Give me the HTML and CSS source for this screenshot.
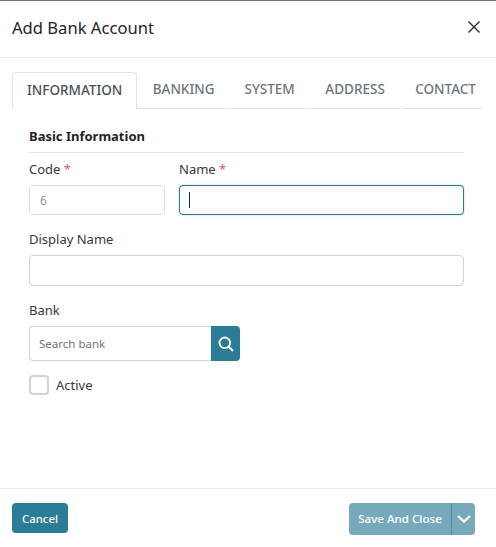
FILE: index.html
```html
<!DOCTYPE html>
<html lang="en">
<head>
    <meta charset="UTF-8">
    <title>Add Bank Account</title>
    <link rel="stylesheet" href="styles.css">
</head>
<body>
<div class="modal">
    <div class="header">
        <h1 class="title">Add Bank Account</h1>
        <svg class="close" width="12" height="12" viewBox="0 0 12 12"><path d="M.5.5l11 11M11.5.5l-11 11" stroke="#212529" stroke-width="1.3" fill="none"/></svg>
    </div>
    <div class="body">
        <ul class="tabs">
            <li class="tab active">INFORMATION</li>
            <li class="tab banking">BANKING</li>
            <li class="tab system">SYSTEM</li>
            <li class="tab address">ADDRESS</li>
            <li class="tab contact">CONTACT</li>
        </ul>
        <div class="form">
            <h2 class="section">Basic Information</h2>
            <div class="row">
                <div class="field code">
                    <label class="label">Code <span class="req">*</span></label>
                    <div class="input disabled">6</div>
                </div>
                <div class="field name">
                    <label class="label">Name <span class="req">*</span></label>
                    <div class="input focused"><span class="caret"></span></div>
                </div>
            </div>
            <div class="field display">
                <label class="label">Display Name</label>
                <div class="input tall"></div>
            </div>
            <div class="field bank">
                <label class="label">Bank</label>
                <div class="search">
                    <div class="search-input">Search bank</div>
                    <div class="search-btn">
                        <svg width="16" height="16" viewBox="0 0 16 16"><circle cx="6.8" cy="6.8" r="5.3" stroke="#fff" stroke-width="1.8" fill="none"/><path d="M10.7 10.7l4.3 4.3" stroke="#fff" stroke-width="2" fill="none"/></svg>
                    </div>
                </div>
            </div>
            <div class="check">
                <span class="box"></span>
                <span class="check-label">Active</span>
            </div>
        </div>
    </div>
    <div class="footer">
        <button class="btn">Cancel</button>
        <div class="split">
            <span class="split-main">Save And Close</span>
            <span class="split-arrow">
                <svg width="14" height="8" viewBox="0 0 14 8"><path d="M1 1l6 5.5L13 1" stroke="#fff" stroke-width="2.3" fill="none"/></svg>
            </span>
        </div>
    </div>
</div>
</body>
</html>
```

FILE: styles.css
```css
* {
    margin: 0;
    padding: 0;
    box-sizing: border-box;
}

body {
    font-family: "Noto Sans", "Open Sans", sans-serif;
    color: #343a40;
    background-color: #fff;
}

ul {
    list-style: none;
}

.modal {
    width: 496px;
    height: 547px;
    border-top: 1px solid #777;
    display: flex;
    flex-direction: column;
}

.header {
    height: 57px;
    padding: 0 16px 4px 12px;
    border-bottom: 1px solid #e9e9e9;
    display: flex;
    align-items: center;
    justify-content: space-between;
}

.title {
    font-size: 16.6px;
    font-weight: 400;
    color: #212529;
}

.body {
    flex: 1;
    padding: 14px 14px 0 12px;
}

.tabs {
    display: flex;
    height: 37px;
    width: 470px;
}

.tab {
    font-size: 13.5px;
    font-weight: 500;
    line-height: 34px;
    padding-left: 15px;
    color: #6c757d;
    border-bottom: 1px solid #e2e2e2;
    white-space: nowrap;
}

.tab.active {
    width: 125px;
    padding-left: 14px;
    color: #495057;
    border: 1px solid #e2e2e2;
    border-bottom: 0;
    border-radius: 4px 4px 0 0;
}

.banking {
    width: 92px;
    padding-left: 16px;
    margin-right: 2px;
}

.system {
    width: 79px;
    padding-left: 14px;
    margin-right: 2px;
}

.address {
    width: 89px;
    padding-left: 14px;
    margin-right: 2px;
}

.contact {
    width: 80px;
    padding-left: 13px;
}

.form {
    padding: 17px 18px 0 17px;
}

.section {
    font-size: 13px;
    font-weight: 700;
    color: #212529;
    line-height: 20px;
    padding-bottom: 6px;
    border-bottom: 1px solid #e2e2e2;
}

.row {
    display: flex;
    gap: 14px;
}

.field {
    margin-top: 7px;
}

.code {
    width: 136px;
}

.name {
    flex: 1;
}

.display {
    margin-top: 15px;
}

.bank {
    margin-top: 15px;
}

.label {
    display: block;
    font-size: 13px;
    line-height: 18px;
    margin-bottom: 7px;
}

.req {
    color: #e0566b;
}

.input {
    height: 30px;
    border: 1px solid #ced4da;
    border-radius: 4px;
    background-color: #fff;
    display: flex;
    align-items: center;
    padding-left: 10px;
    font-size: 12px;
}

.input.tall {
    height: 31px;
}

.disabled {
    color: #999;
    border-color: #ddd;
}

.focused {
    padding-left: 9px;
    border-color: #2b7c96;
    box-shadow: 0 0 2px rgba(43, 124, 150, 0.4);
}

.caret {
    width: 1px;
    height: 16px;
    background-color: #212529;
}

.search {
    display: flex;
    width: 211px;
    height: 35px;
}

.search-input {
    flex: 1;
    border: 1px solid #ced4da;
    border-right: 0;
    border-radius: 4px 0 0 4px;
    padding-left: 9px;
    font-size: 11.5px;
    line-height: 33px;
    color: #6c757d;
}

.search-btn {
    width: 29px;
    background-color: #2b7c96;
    border-radius: 0 4px 4px 0;
    display: flex;
    align-items: center;
    justify-content: center;
}

.check {
    display: flex;
    align-items: center;
    gap: 7px;
    margin-top: 14px;
}

.box {
    width: 20px;
    height: 20px;
    border: 2px solid #ced4da;
    border-radius: 4px;
}

.check-label {
    font-size: 13px;
}

.footer {
    height: 59px;
    border-top: 1px solid #e9e9e9;
    padding: 14px 21px 0 12px;
    display: flex;
    justify-content: space-between;
    align-items: flex-start;
}

.btn {
    width: 56px;
    height: 30px;
    border: 0;
    border-radius: 4px;
    background-color: #2b7c96;
    color: #fff;
    font-family: inherit;
    font-size: 11.4px;
    font-weight: 500;
}

.split {
    display: flex;
    height: 32px;
    border-radius: 4px;
    overflow: hidden;
    background-color: #76a9bb;
    color: #fff;
    font-size: 11.6px;
    font-weight: 500;
}

.split-main {
    width: 102px;
    line-height: 32px;
    text-align: center;
}

.split-arrow {
    width: 24px;
    border-left: 1px solid #4f8ca3;
    display: flex;
    align-items: center;
    justify-content: center;
}
```
